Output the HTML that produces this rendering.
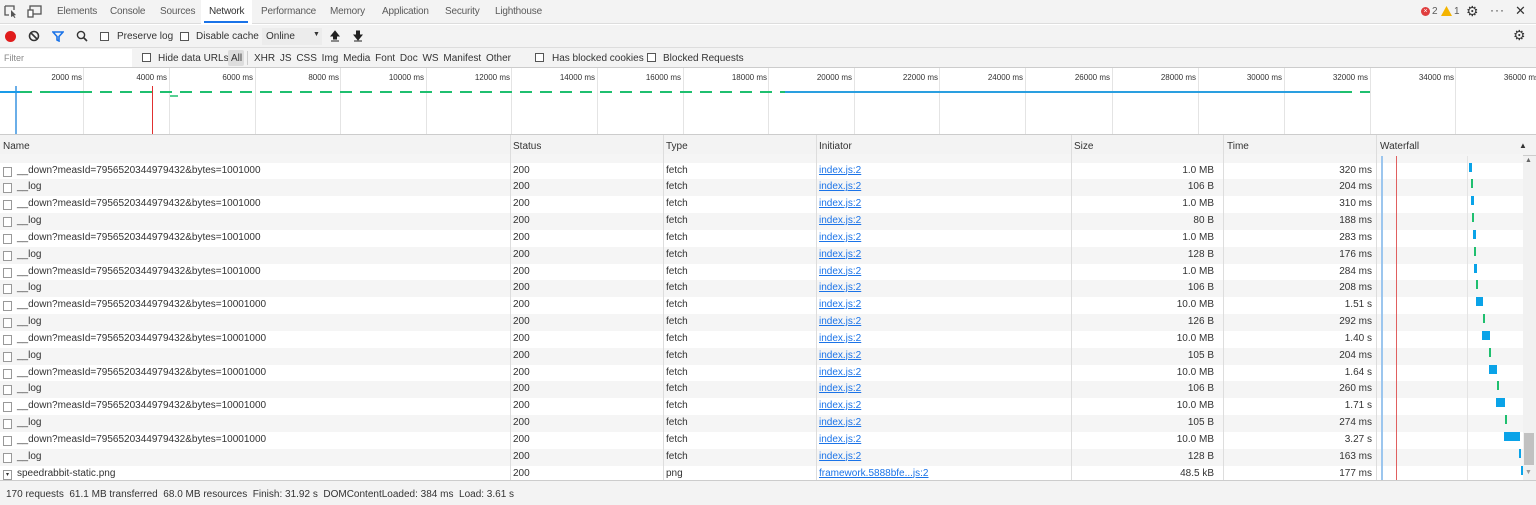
<!DOCTYPE html>
<html><head><meta charset="utf-8"><style>
*{box-sizing:border-box;margin:0;padding:0}
body{width:1536px;height:505px;overflow:hidden;background:#fff;font-family:"Liberation Sans",sans-serif;font-size:10px;color:#333;position:relative}
.a{position:absolute}
.tabs{top:0;left:0;width:1536px;height:24px;background:#f3f3f3;border-bottom:1px solid #ddd}
.tab{position:absolute;top:6px;color:#5a5a5a;font-size:10px;letter-spacing:-0.2px}
.tb{top:25px;left:0;width:1536px;height:23px;background:#f3f3f3;border-bottom:1px solid #ddd}
.fb{top:48px;left:0;width:1536px;height:20px;background:#f3f3f3;border-bottom:1px solid #ccc}
.cb{position:absolute;width:9px;height:9px;border:1px solid #555;background:#fff}
.t{position:absolute;white-space:nowrap}
.ov{top:68px;left:0;width:1536px;height:67px;background:#fff;border-bottom:1px solid #ccc}
.gl{position:absolute;top:0;width:1px;height:66px;background:#e4e4e4}
.lb{position:absolute;top:5px;font-size:8px;color:#333;text-align:right;width:60px}
.hd{top:135px;left:0;width:1536px;height:21px;background:#f3f3f3;border-bottom:1px solid #ccc}
.hc{position:absolute;top:6px}
.cl{position:absolute;top:135px;width:1px;height:345px;background:#ddd}
.rows{position:absolute;top:154px;left:0;width:1523px}
.r{height:16.83px;position:relative;line-height:16.83px;white-space:nowrap}
.r.s{background:#f5f5f5}
.r span{position:absolute;top:0}
.r .ic{top:4px;left:3px;width:9px;height:10px;border:1px solid #999;background:#fff}
.lk{color:#1a73e8;text-decoration:underline}
.wb{position:absolute;top:4px;height:9px}
.ft{top:480px;left:0;width:1536px;height:25px;background:#f3f3f3;border-top:1px solid #ccc}
</style></head><body>
<div class="a tabs">
 <svg class="a" style="left:4px;top:5px" width="14" height="13" viewBox="0 0 14 13"><path d="M1 1h9v4M1 1v9h4" fill="none" stroke="#555" stroke-width="1.3"/><path d="M7 5l5 5-2 .5 1.5 2-1 .5-1.5-2L7 12z" fill="#555"/></svg>
 <svg class="a" style="left:27px;top:5px" width="15" height="13" viewBox="0 0 15 13"><rect x="3" y="1" width="11" height="8" fill="none" stroke="#555" stroke-width="1.3"/><rect x="1" y="5" width="5" height="7" fill="#fff" stroke="#555" stroke-width="1.3"/></svg>
 <span class="tab" style="left:57px">Elements</span>
 <span class="tab" style="left:110px">Console</span>
 <span class="tab" style="left:160px">Sources</span>
 <div class="a" style="left:201px;top:0;width:51px;height:24px;background:#fff"></div>
 <span class="tab" style="left:209px;color:#333">Network</span>
 <div class="a" style="left:204px;top:21px;width:44px;height:2px;background:#1a73e8"></div>
 <span class="tab" style="left:261px">Performance</span>
 <span class="tab" style="left:330px">Memory</span>
 <span class="tab" style="left:382px">Application</span>
 <span class="tab" style="left:445px">Security</span>
 <span class="tab" style="left:495px">Lighthouse</span>
 <div class="a" style="left:1421px;top:7px;width:9px;height:9px;border-radius:50%;background:#e03e3e;color:#fff;font-size:7px;line-height:9px;text-align:center">×</div>
 <span class="tab" style="left:1432px">2</span>
 <svg class="a" style="left:1441px;top:6px" width="11" height="10"><path d="M5.5 0L11 10H0z" fill="#f4b400"/></svg>
 <span class="tab" style="left:1454px">1</span>
 <span class="tab" style="left:1466px;top:3px;font-size:14px;color:#333">⚙</span>
 <span class="tab" style="left:1490px;top:3px;font-size:12px;color:#333;letter-spacing:1px">···</span>
 <span class="tab" style="left:1515px;top:3px;font-size:13px;color:#333">✕</span>
</div>
<div class="a tb">
 <div class="a" style="left:5px;top:6px;width:11px;height:11px;border-radius:50%;background:#e01c1c"></div>
 <svg class="a" style="left:28px;top:5px" width="12" height="12"><circle cx="6" cy="6" r="4.5" fill="none" stroke="#333" stroke-width="1.6"/><path d="M3 3l6 6" stroke="#333" stroke-width="1.6"/></svg>
 <svg class="a" style="left:52px;top:5px" width="12" height="12"><path d="M1 2h10L7 6.5V11L5 10V6.5z" fill="none" stroke="#1a73e8" stroke-width="1.6"/></svg>
 <svg class="a" style="left:76px;top:5px" width="12" height="12"><circle cx="5" cy="5" r="3.6" fill="none" stroke="#333" stroke-width="1.4"/><path d="M7.5 7.5l3.5 3.5" stroke="#333" stroke-width="1.6"/></svg>
 <div class="cb" style="left:100px;top:7px"></div><span class="t" style="left:117px;top:6px">Preserve log</span>
 <div class="cb" style="left:180px;top:7px"></div><span class="t" style="left:196px;top:6px">Disable cache</span>
 <div class="a" style="left:262px;top:3px;width:60px;height:17px;background:#ececec"></div>
 <span class="t" style="left:266px;top:6px">Online</span>
 <span class="t" style="left:313px;top:6px;font-size:7px">▼</span>
 <svg class="a" style="left:330px;top:5px" width="10" height="12"><path d="M5 1L1 6h2.5v3h3V6H9z M1 11h8" fill="#222" stroke="#222"/></svg>
 <svg class="a" style="left:353px;top:5px" width="10" height="12"><path d="M5 10L1 5h2.5V1h3v4H9z M1 11h8" fill="#222" stroke="#222"/></svg>
 <span class="t" style="left:1513px;top:2px;font-size:14px;color:#333">⚙</span>
</div>
<div class="a fb">
 <div class="a" style="left:0;top:1px;width:132px;height:18px;background:#fff"></div>
 <span class="t" style="left:4px;top:5px;color:#888;font-size:9px">Filter</span>
 <div class="cb" style="left:142px;top:5px"></div><span class="t" style="left:158px;top:5px">Hide data URLs</span>
 <div class="a" style="left:228px;top:2px;width:16px;height:16px;background:#ddd;border-radius:2px"></div>
 <span class="t" style="left:231px;top:5px">All</span>
 <div class="a" style="left:247px;top:3px;width:1px;height:14px;background:#ccc"></div>
 <span class="t" style="left:254px;top:5px;word-spacing:2px">XHR JS CSS Img Media Font Doc WS Manifest Other</span>
 <div class="cb" style="left:535px;top:5px"></div><span class="t" style="left:552px;top:5px">Has blocked cookies</span>
 <div class="cb" style="left:647px;top:5px"></div><span class="t" style="left:663px;top:5px">Blocked Requests</span>
</div>
<div class="a ov">
 <div class="gl" style="left:83px"></div><div class="gl" style="left:169px"></div><div class="gl" style="left:255px"></div><div class="gl" style="left:340px"></div><div class="gl" style="left:426px"></div><div class="gl" style="left:511px"></div><div class="gl" style="left:597px"></div><div class="gl" style="left:683px"></div><div class="gl" style="left:768px"></div><div class="gl" style="left:854px"></div><div class="gl" style="left:939px"></div><div class="gl" style="left:1025px"></div><div class="gl" style="left:1112px"></div><div class="gl" style="left:1198px"></div><div class="gl" style="left:1284px"></div><div class="gl" style="left:1370px"></div><div class="gl" style="left:1455px"></div>
 <span class="lb" style="left:22px">2000 ms</span><span class="lb" style="left:107px">4000 ms</span><span class="lb" style="left:193px">6000 ms</span><span class="lb" style="left:279px">8000 ms</span><span class="lb" style="left:364px">10000 ms</span><span class="lb" style="left:450px">12000 ms</span><span class="lb" style="left:535px">14000 ms</span><span class="lb" style="left:621px">16000 ms</span><span class="lb" style="left:707px">18000 ms</span><span class="lb" style="left:792px">20000 ms</span><span class="lb" style="left:878px">22000 ms</span><span class="lb" style="left:963px">24000 ms</span><span class="lb" style="left:1050px">26000 ms</span><span class="lb" style="left:1136px">28000 ms</span><span class="lb" style="left:1222px">30000 ms</span><span class="lb" style="left:1308px">32000 ms</span><span class="lb" style="left:1394px">34000 ms</span><span class="lb" style="left:1479px">36000 ms</span>
 <div class="a" style="left:15px;top:18px;width:2px;height:48px;background:#6aaee8"></div>
 <div class="a" style="left:152px;top:18px;width:1px;height:48px;background:#e03030"></div>
 <svg class="a" style="left:0;top:21px" width="1536" height="8"><line x1="0" y1="3" x2="1370" y2="3" stroke="#1fbf6f" stroke-width="2" stroke-dasharray="12 8"/><line x1="0" y1="3" x2="20" y2="3" stroke="#1a9be8" stroke-width="2"/><line x1="50" y1="3" x2="80" y2="3" stroke="#1a9be8" stroke-width="2"/><line x1="785" y1="3" x2="1340" y2="3" stroke="#2a9fe0" stroke-width="2"/><line x1="170" y1="7" x2="178" y2="7" stroke="#1fbf6f" stroke-width="1.5"/></svg>
</div>
<div class="a hd">
 <span class="hc" style="left:3px">Name</span><span class="hc" style="left:513px">Status</span><span class="hc" style="left:666px">Type</span><span class="hc" style="left:819px">Initiator</span><span class="hc" style="left:1074px">Size</span><span class="hc" style="left:1227px">Time</span><span class="hc" style="left:1380px">Waterfall</span><span class="hc" style="left:1519px;font-size:8px">▲</span>
</div>
<div class="rows">
<div class="r s" style="height:8.6px"></div>
<div class="r"><span class="ic"></span><span style="left:17px">__down?measId=7956520344979432&amp;bytes=1001000</span><span style="left:513px">200</span><span style="left:666px">fetch</span><span class="lk" style="left:819px">index.js:2</span><span style="left:1072px;width:142px;text-align:right">1.0 MB</span><span style="left:1224px;width:148px;text-align:right">320 ms</span><span class="wb" style="left:1469px;width:3px;background:#0aa3e8"></span></div>
<div class="r s"><span class="ic"></span><span style="left:17px">__log</span><span style="left:513px">200</span><span style="left:666px">fetch</span><span class="lk" style="left:819px">index.js:2</span><span style="left:1072px;width:142px;text-align:right">106 B</span><span style="left:1224px;width:148px;text-align:right">204 ms</span><span class="wb" style="left:1471px;width:2px;background:#1fbf6f"></span></div>
<div class="r"><span class="ic"></span><span style="left:17px">__down?measId=7956520344979432&amp;bytes=1001000</span><span style="left:513px">200</span><span style="left:666px">fetch</span><span class="lk" style="left:819px">index.js:2</span><span style="left:1072px;width:142px;text-align:right">1.0 MB</span><span style="left:1224px;width:148px;text-align:right">310 ms</span><span class="wb" style="left:1471px;width:3px;background:#0aa3e8"></span></div>
<div class="r s"><span class="ic"></span><span style="left:17px">__log</span><span style="left:513px">200</span><span style="left:666px">fetch</span><span class="lk" style="left:819px">index.js:2</span><span style="left:1072px;width:142px;text-align:right">80 B</span><span style="left:1224px;width:148px;text-align:right">188 ms</span><span class="wb" style="left:1472px;width:2px;background:#1fbf6f"></span></div>
<div class="r"><span class="ic"></span><span style="left:17px">__down?measId=7956520344979432&amp;bytes=1001000</span><span style="left:513px">200</span><span style="left:666px">fetch</span><span class="lk" style="left:819px">index.js:2</span><span style="left:1072px;width:142px;text-align:right">1.0 MB</span><span style="left:1224px;width:148px;text-align:right">283 ms</span><span class="wb" style="left:1473px;width:3px;background:#0aa3e8"></span></div>
<div class="r s"><span class="ic"></span><span style="left:17px">__log</span><span style="left:513px">200</span><span style="left:666px">fetch</span><span class="lk" style="left:819px">index.js:2</span><span style="left:1072px;width:142px;text-align:right">128 B</span><span style="left:1224px;width:148px;text-align:right">176 ms</span><span class="wb" style="left:1474px;width:2px;background:#1fbf6f"></span></div>
<div class="r"><span class="ic"></span><span style="left:17px">__down?measId=7956520344979432&amp;bytes=1001000</span><span style="left:513px">200</span><span style="left:666px">fetch</span><span class="lk" style="left:819px">index.js:2</span><span style="left:1072px;width:142px;text-align:right">1.0 MB</span><span style="left:1224px;width:148px;text-align:right">284 ms</span><span class="wb" style="left:1474px;width:3px;background:#0aa3e8"></span></div>
<div class="r s"><span class="ic"></span><span style="left:17px">__log</span><span style="left:513px">200</span><span style="left:666px">fetch</span><span class="lk" style="left:819px">index.js:2</span><span style="left:1072px;width:142px;text-align:right">106 B</span><span style="left:1224px;width:148px;text-align:right">208 ms</span><span class="wb" style="left:1476px;width:2px;background:#1fbf6f"></span></div>
<div class="r"><span class="ic"></span><span style="left:17px">__down?measId=7956520344979432&amp;bytes=10001000</span><span style="left:513px">200</span><span style="left:666px">fetch</span><span class="lk" style="left:819px">index.js:2</span><span style="left:1072px;width:142px;text-align:right">10.0 MB</span><span style="left:1224px;width:148px;text-align:right">1.51 s</span><span class="wb" style="left:1476px;width:7px;background:#0aa3e8"></span></div>
<div class="r s"><span class="ic"></span><span style="left:17px">__log</span><span style="left:513px">200</span><span style="left:666px">fetch</span><span class="lk" style="left:819px">index.js:2</span><span style="left:1072px;width:142px;text-align:right">126 B</span><span style="left:1224px;width:148px;text-align:right">292 ms</span><span class="wb" style="left:1483px;width:2px;background:#1fbf6f"></span></div>
<div class="r"><span class="ic"></span><span style="left:17px">__down?measId=7956520344979432&amp;bytes=10001000</span><span style="left:513px">200</span><span style="left:666px">fetch</span><span class="lk" style="left:819px">index.js:2</span><span style="left:1072px;width:142px;text-align:right">10.0 MB</span><span style="left:1224px;width:148px;text-align:right">1.40 s</span><span class="wb" style="left:1482px;width:8px;background:#0aa3e8"></span></div>
<div class="r s"><span class="ic"></span><span style="left:17px">__log</span><span style="left:513px">200</span><span style="left:666px">fetch</span><span class="lk" style="left:819px">index.js:2</span><span style="left:1072px;width:142px;text-align:right">105 B</span><span style="left:1224px;width:148px;text-align:right">204 ms</span><span class="wb" style="left:1489px;width:2px;background:#1fbf6f"></span></div>
<div class="r"><span class="ic"></span><span style="left:17px">__down?measId=7956520344979432&amp;bytes=10001000</span><span style="left:513px">200</span><span style="left:666px">fetch</span><span class="lk" style="left:819px">index.js:2</span><span style="left:1072px;width:142px;text-align:right">10.0 MB</span><span style="left:1224px;width:148px;text-align:right">1.64 s</span><span class="wb" style="left:1489px;width:8px;background:#0aa3e8"></span></div>
<div class="r s"><span class="ic"></span><span style="left:17px">__log</span><span style="left:513px">200</span><span style="left:666px">fetch</span><span class="lk" style="left:819px">index.js:2</span><span style="left:1072px;width:142px;text-align:right">106 B</span><span style="left:1224px;width:148px;text-align:right">260 ms</span><span class="wb" style="left:1497px;width:2px;background:#1fbf6f"></span></div>
<div class="r"><span class="ic"></span><span style="left:17px">__down?measId=7956520344979432&amp;bytes=10001000</span><span style="left:513px">200</span><span style="left:666px">fetch</span><span class="lk" style="left:819px">index.js:2</span><span style="left:1072px;width:142px;text-align:right">10.0 MB</span><span style="left:1224px;width:148px;text-align:right">1.71 s</span><span class="wb" style="left:1496px;width:9px;background:#0aa3e8"></span></div>
<div class="r s"><span class="ic"></span><span style="left:17px">__log</span><span style="left:513px">200</span><span style="left:666px">fetch</span><span class="lk" style="left:819px">index.js:2</span><span style="left:1072px;width:142px;text-align:right">105 B</span><span style="left:1224px;width:148px;text-align:right">274 ms</span><span class="wb" style="left:1505px;width:2px;background:#1fbf6f"></span></div>
<div class="r"><span class="ic"></span><span style="left:17px">__down?measId=7956520344979432&amp;bytes=10001000</span><span style="left:513px">200</span><span style="left:666px">fetch</span><span class="lk" style="left:819px">index.js:2</span><span style="left:1072px;width:142px;text-align:right">10.0 MB</span><span style="left:1224px;width:148px;text-align:right">3.27 s</span><span class="wb" style="left:1504px;width:16px;background:#0aa3e8"></span></div>
<div class="r s"><span class="ic"></span><span style="left:17px">__log</span><span style="left:513px">200</span><span style="left:666px">fetch</span><span class="lk" style="left:819px">index.js:2</span><span style="left:1072px;width:142px;text-align:right">128 B</span><span style="left:1224px;width:148px;text-align:right">163 ms</span><span class="wb" style="left:1519px;width:2px;background:#0aa3e8"></span></div>
<div class="r"><span class="ic" style="font-size:6px;line-height:8px;text-align:center">▾</span><span style="left:17px">speedrabbit-static.png</span><span style="left:513px">200</span><span style="left:666px">png</span><span class="lk" style="left:819px">framework.5888bfe...js:2</span><span style="left:1072px;width:142px;text-align:right">48.5 kB</span><span style="left:1224px;width:148px;text-align:right">177 ms</span><span class="wb" style="left:1521px;width:2px;background:#0aa3e8"></span></div>
</div>
<div class="cl" style="left:510px"></div><div class="cl" style="left:663px"></div><div class="cl" style="left:816px"></div><div class="cl" style="left:1071px"></div><div class="cl" style="left:1223px"></div><div class="cl" style="left:1376px"></div>
<div class="a" style="left:1381px;top:156px;width:2px;height:324px;background:#9cc6ee"></div>
<div class="a" style="left:1396px;top:156px;width:1px;height:324px;background:#e06060"></div>
<div class="a" style="left:1467px;top:156px;width:1px;height:324px;background:#e4e4e4"></div>
<div class="a" style="left:1523px;top:156px;width:13px;height:324px;background:#f1f1f1"></div>
<div class="a" style="left:1524px;top:433px;width:10px;height:32px;background:#c1c1c1"></div>
<span class="t" style="left:1525px;top:157px;font-size:7px;color:#666">▲</span>
<span class="t" style="left:1525px;top:469px;font-size:7px;color:#999">▼</span>
<div class="a ft"><span class="t" style="left:6px;top:8px">170 requests&nbsp; 61.1 MB transferred&nbsp; 68.0 MB resources&nbsp; Finish: 31.92 s&nbsp; DOMContentLoaded: 384 ms&nbsp; Load: 3.61 s</span></div>
</body></html>
